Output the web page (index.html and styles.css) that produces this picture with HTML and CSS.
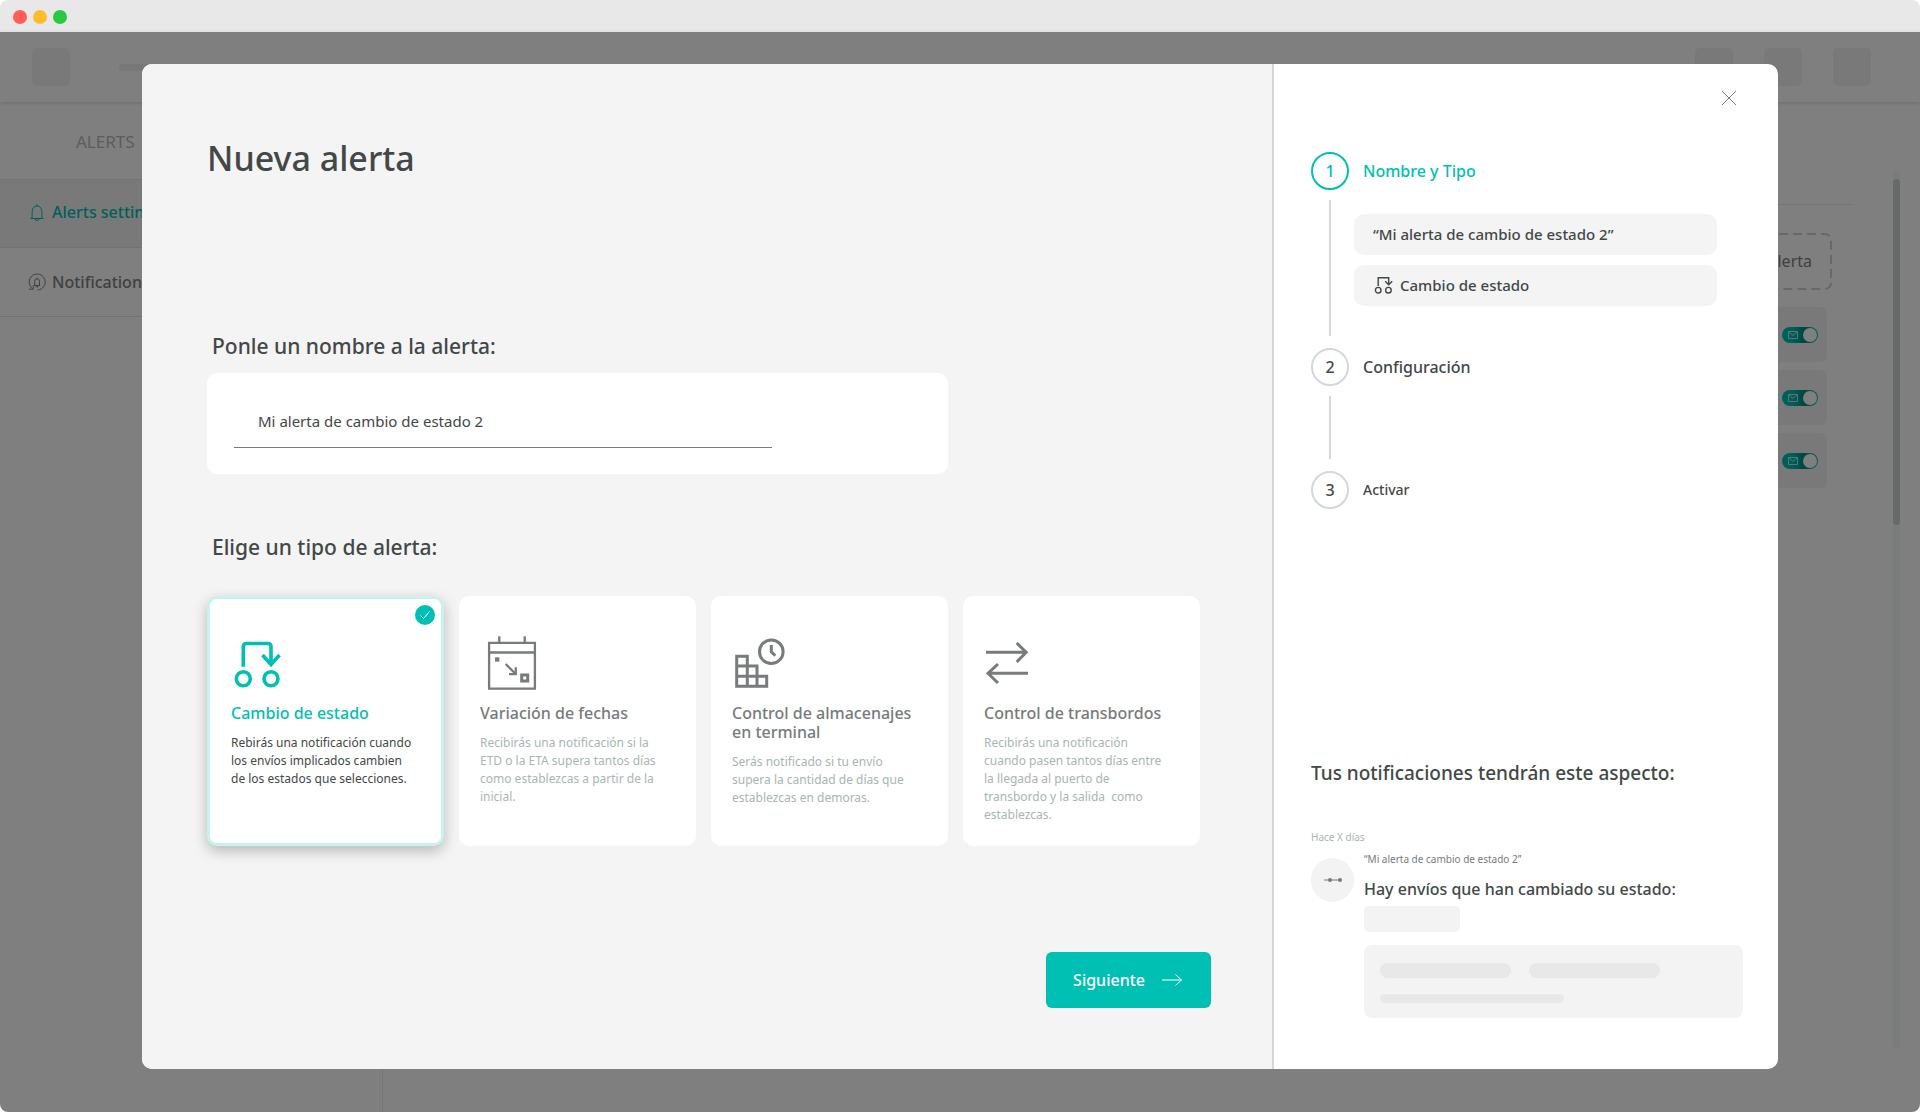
FILE: index.html
```html
<!DOCTYPE html>
<html lang="es">
<head>
<meta charset="UTF-8">
<meta name="viewport" content="width=device-width, initial-scale=1.0">
<title>Nueva alerta</title>
<link rel="stylesheet" href="styles.css">
</head>
<body>

<div class="window">
    <div class="titlebar">
        <span class="dot red"></span>
        <span class="dot yellow"></span>
        <span class="dot green"></span>
    </div>

    <div class="workspace">
        <!-- Page behind the modal -->
        <header class="topbar">
            <span class="square"></span>
            <span class="search"></span>
            <span class="square first-right"></span>
            <span class="square"></span>
            <span class="square"></span>
        </header>

        <div class="page">
            <nav class="sidebar">
                <p class="sidebar-title">ALERTS</p>
                <a class="active" href="#settings">
                    <svg width="18" height="20" viewBox="0 0 18 20"><path d="M2.500 16.500h13M4 16.500c0-2 .2-3.500.2-7 0-3.500 2-5.500 4.800-5.500s4.800 2 4.800 5.500c0 3.500.2 5 .2 7M9 4V2.200M7.200 16.700a1.800 1.800 0 0 0 3.600 0"/></svg>
                    Alerts settings
                </a>
                <a href="#notifications">
                    <svg width="18" height="20" viewBox="0 0 18 20"><path d="M4.500 16.500A8 8 0 1 1 9.500 18M.8 17.200h4.400v-3.700M5.800 13.500h6.400M6.700 13.500V9.200a2.400 2.400 0 0 1 4.800 0v4.300M9.100 6.800V5.500M8 14a1.100 1.100 0 0 0 2.200 0"/></svg>
                    Notifications
                </a>
            </nav>

            <main class="alerts">
                <div class="alerts-body">
                    <div class="alerts-head"></div>
                    <button class="new-alert" type="button">
                        <svg width="100%" height="100%"><rect x="1" y="1" width="99%" height="55" rx="6"/></svg>
                        + Nueva alerta
                    </button>
                    <div class="alert-row">
                        <label class="switch">
                            <input type="checkbox" aria-label="Email" checked>
                            <svg width="10" height="8" viewBox="0 0 10 8"><path d="M.5.5h9v7h-9zM1 1l4 3.500L9 1"/></svg>
                        </label>
                    </div>
                    <div class="alert-row">
                        <label class="switch">
                            <input type="checkbox" aria-label="Email" checked>
                            <svg width="10" height="8" viewBox="0 0 10 8"><path d="M.5.5h9v7h-9zM1 1l4 3.500L9 1"/></svg>
                        </label>
                    </div>
                    <div class="alert-row">
                        <label class="switch">
                            <input type="checkbox" aria-label="Email" checked>
                            <svg width="10" height="8" viewBox="0 0 10 8"><path d="M.5.5h9v7h-9zM1 1l4 3.500L9 1"/></svg>
                        </label>
                    </div>
                </div>
                <div class="scrollbar"><div class="thumb"></div></div>
            </main>
        </div>

        <!-- Modal -->
        <div class="overlay">
            <div class="modal" role="dialog" aria-labelledby="modalTitle">
                <form class="form" id="alertForm">
                    <h1 id="modalTitle">Nueva alerta</h1>

                    <label class="section-title" for="alert_name">Ponle un nombre a la alerta:</label>
                    <div class="name-box">
                        <input type="text" id="alert_name" name="alert_name" value="Mi alerta de cambio de estado 2">
                    </div>

                    <h2 class="section-title">Elige un tipo de alerta:</h2>
                    <div class="types">
                        <label class="type selected">
                            <input type="radio" name="alert_type" value="estado" checked>
                            <svg class="check" width="20" height="20" viewBox="0 0 20 20"><circle cx="10" cy="10" r="10"/><path d="M5.500 10.500l3 3 6-7"/></svg>
                            <svg class="icon" viewBox="0 0 58 56" stroke-width="3.600"><path d="M12.300 31.700V11.500a3 3 0 0 1 3-3H37a3 3 0 0 1 3 3V29M31.500 20l8.500 9.500 8.500-9.500"/><circle cx="12.300" cy="43.700" r="7"/><circle cx="40" cy="43.700" r="7"/></svg>
                            <span class="type-name">Cambio de estado</span>
                            <span class="type-text">Rebirás una notificación cuando<br>los envíos implicados cambien<br>de los estados que selecciones.</span>
                        </label>
                        <label class="type">
                            <input type="radio" name="alert_type" value="fechas">
                            <svg class="icon" viewBox="0 0 58 56" stroke-width="2.300"><path d="M9.100 7.800h45.800v45.800H9.100zM9 17.500h46M19.300 1.300v6M44.700 1.300v6M25.700 29l10 10M29 39.200h6.800v-7"/><path d="M16.200 23.500h2v2h-2z"/><path stroke-width="3" d="M41.700 40h6v6h-6z"/></svg>
                            <span class="type-name">Variación de fechas</span>
                            <span class="type-text">Recibirás una notificación si la<br>ETD o la ETA supera tantos días<br>como establezcas a partir de la<br>inicial.</span>
                        </label>
                        <label class="type">
                            <input type="radio" name="alert_type" value="almacenajes">
                            <svg class="icon" viewBox="0 0 58 56" stroke-width="3"><path d="M4.700 21.300h10.600v30M4.700 31H25v20.300M4.700 41.300h30v10h-30zM4.700 19.800v32"/><circle cx="39.300" cy="16.700" r="11.800"/><path d="M39.300 10v6.800l4 4"/></svg>
                            <span class="type-name">Control de almacenajes en terminal</span>
                            <span class="type-text">Serás notificado si tu envío<br>supera la cantidad de días que<br>establezcas en demoras.</span>
                        </label>
                        <label class="type">
                            <input type="radio" name="alert_type" value="transbordos">
                            <svg class="icon" viewBox="0 0 58 56" stroke-width="3"><path d="M2 17.300h41M32.700 8l9.500 9.300-9.500 9.700M44 38.300H3.500M14 29l-10 9.300L14 48"/></svg>
                            <span class="type-name">Control de transbordos</span>
                            <span class="type-text">Recibirás una notificación<br>cuando pasen tantos días entre<br>la llegada al puerto de<br>transbordo y la salida&nbsp; como<br>establezcas.</span>
                        </label>
                    </div>

                    <button class="next" type="submit">
                        Siguiente
                        <svg width="20" height="14" viewBox="0 0 20 14"><path d="M0 7h19.500M13.500 1.500L19.500 7l-6 5.500"/></svg>
                    </button>
                </form>

                <aside class="summary">
                    <button class="close" type="button" aria-label="Cerrar">
                        <svg width="14" height="14" viewBox="0 0 14 14"><path d="M0 0l14 14M14 0L0 14"/></svg>
                    </button>

                    <ol class="steps">
                        <li class="step current">
                            <div class="marker"><span class="number">1</span><span class="line"></span></div>
                            <div class="step-body">
                                <p class="step-name">Nombre y Tipo</p>
                                <div class="chips">
                                    <div class="chip">“Mi alerta de cambio de estado 2”</div>
                                    <div class="chip">
                                        <svg width="20" height="18" viewBox="0 0 20 18" stroke-width="1.400"><path d="M5.200 10V1.700h10.500v6.500M12.200 5.200l3.500 3.500 3.500-3.500"/><circle cx="5.200" cy="14.200" r="2.800"/><circle cx="15.400" cy="14.200" r="2.800"/></svg>
                                        Cambio de estado
                                    </div>
                                </div>
                            </div>
                        </li>
                        <li class="step">
                            <div class="marker"><span class="number">2</span><span class="line"></span></div>
                            <div class="step-body">
                                <p class="step-name">Configuración</p>
                            </div>
                        </li>
                        <li class="step last">
                            <div class="marker"><span class="number">3</span></div>
                            <div class="step-body">
                                <p class="step-name">Activar</p>
                            </div>
                        </li>
                    </ol>

                    <section class="preview">
                        <h3>Tus notificaciones tendrán este aspecto:</h3>
                        <p class="time">Hace X días</p>
                        <div class="notification">
                            <div class="avatar">
                                <svg width="20" height="6" viewBox="0 0 20 6"><path d="M1 3h16"/><circle cx="7" cy="3" r="2"/><circle cx="17" cy="3" r="2"/></svg>
                            </div>
                            <div class="notification-body">
                                <p class="alert-name">“Mi alerta de cambio de estado 2”</p>
                                <p class="message">Hay envíos que han cambiado su estado:</p>
                                <div class="tag"></div>
                                <div class="detail">
                                    <span class="bar"></span>
                                    <span class="bar"></span>
                                    <span class="bar thin"></span>
                                </div>
                            </div>
                        </div>
                    </section>
                </aside>
            </div>
        </div>
    </div>
</div>

</body>
</html>
```
FILE: styles.css
```css
* {
    box-sizing: border-box;
}

body {
    margin: 0;
    background-color: #fff;
    font-family: "Noto Sans", sans-serif;
    font-size: 16px;
    color: #424847;
}

h1, h2, h3, p, ol {
    margin: 0;
    padding: 0;
    font-weight: 500;
}

svg {
    display: block;
    flex: none;
    fill: none;
    stroke: currentColor;
}

button, input {
    font-family: inherit;
    color: inherit;
}

.window {
    display: flex;
    flex-direction: column;
    min-height: 100vh;
    border-radius: 8px;
    overflow: hidden;
}

/* Title bar */
.titlebar {
    display: flex;
    align-items: center;
    gap: 6px;
    height: 32px;
    padding: 2px 13px 0;
    background-color: #e8e8e8;
}

.dot {
    width: 14px;
    height: 14px;
    border-radius: 50%;
}

.red {
    background-color: #ff5f57;
}

.yellow {
    background-color: #ffbd2e;
}

.green {
    background-color: #28ca42;
}

.workspace {
    position: relative;
    flex: 1;
    display: flex;
    flex-direction: column;
}

/* Top bar */
.topbar {
    display: flex;
    align-items: flex-start;
    gap: 31px;
    height: 70px;
    padding: 16px 49px 0 32px;
    box-shadow: 0 1px 4px rgba(0, 0, 0, 0.16);
}

.square {
    width: 38px;
    height: 38px;
    border-radius: 5px;
    background-color: #f3f3f3;
}

.search {
    width: 240px;
    height: 7px;
    margin: 16px 0 0 18px;
    border-radius: 4px;
    background-color: #f0f0f0;
}

.first-right {
    margin-left: auto;
}

.page {
    flex: 1;
    display: flex;
}

/* Sidebar */
.sidebar {
    width: 383px;
    border-right: 1px solid #e8e8e8;
}

.sidebar-title {
    padding: 28px 0 25px 76px;
    font-size: 17px;
    font-weight: 400;
    line-height: 24px;
    color: #b4bcbb;
}

.sidebar a {
    display: flex;
    align-items: center;
    gap: 6px;
    height: 70px;
    padding-left: 28px;
    border-top: 1px solid #e4e4e4;
    border-bottom: 1px solid #e4e4e4;
    color: #7c8282;
    font-weight: 500;
    text-decoration: none;
}

.sidebar a.active {
    height: 68px;
    padding-bottom: 4px;
    border-bottom: none;
    background-color: #f3f3f3;
    color: #00bfb3;
}

/* Alert list */
.alerts {
    flex: 1;
    display: flex;
    gap: 41px;
    padding: 0 20px 64px 41px;
}

.alerts-body {
    flex: 1;
    display: flex;
    flex-direction: column;
}

.alerts-head {
    height: 103px;
    margin-bottom: 28px;
    border-bottom: 1px solid #e6e9e9;
}

.new-alert {
    position: relative;
    align-self: flex-end;
    width: 200px;
    height: 57px;
    margin: 0 20px 17px 0;
    padding: 0 20px 2px;
    border: none;
    background: none;
    font-size: 16px;
    text-align: right;
    color: #7c8282;
}

.new-alert svg {
    position: absolute;
    inset: 0;
    stroke: #ccd2d1;
    stroke-width: 2;
    stroke-dasharray: 9 5;
}

.alert-row {
    display: flex;
    align-items: center;
    justify-content: flex-end;
    height: 55px;
    margin: 0 25px 8px 0;
    padding: 0 9px;
    border-radius: 6px;
    background-color: #f3f3f3;
}

.switch {
    position: relative;
}

.switch input {
    display: block;
    appearance: none;
    width: 36px;
    height: 16px;
    margin: 0;
    padding: 1px;
    border-radius: 8px;
    background: linear-gradient(90deg, #00bfb3 30%, #008c84 60%, #00bfb3 90%);
}

.switch input::before {
    content: "";
    display: block;
    width: 14px;
    height: 14px;
    margin-left: auto;
    border-radius: 50%;
    background-color: #fff;
}

.switch svg {
    position: absolute;
    left: 6px;
    top: 4px;
    stroke: #b0ece8;
}

.scrollbar {
    width: 7px;
    margin-top: 69px;
    padding-top: 8px;
    border-radius: 4px;
    background-color: #f4f6f6;
}

.thumb {
    height: 346px;
    border-radius: 4px;
    background-color: #d0d5d4;
}

/* Modal */
.overlay {
    position: absolute;
    inset: 0;
    display: flex;
    padding: 32px 142px 43px;
    background-color: rgba(0, 0, 0, 0.5);
}

.modal {
    flex: 1;
    display: flex;
    border-radius: 10px;
    background-color: #fff;
    overflow: hidden;
}

.form {
    flex: 1;
    display: flex;
    flex-direction: column;
    padding: 74px 61px 61px 65px;
    background-color: #f4f4f4;
}

.form h1 {
    margin-bottom: 154px;
    font-size: 34px;
    line-height: 40px;
}

.section-title {
    padding-left: 5px;
    font-size: 21px;
    font-weight: 500;
    line-height: 28px;
}

.name-box {
    max-width: 741px;
    margin: 13px 0 59px;
    padding: 33px 27px 26px;
    border-radius: 10px;
    background-color: #fff;
}

.name-box input {
    display: block;
    width: 100%;
    max-width: 538px;
    height: 42px;
    padding: 0 24px 12px;
    border: none;
    border-bottom: 1px solid #777b7b;
    background: none;
    font-size: 15px;
    outline: none;
}

/* Alert types */
.types {
    display: grid;
    grid-template-columns: repeat(4, 1fr);
    gap: 15px;
    margin: 35px 11px 106px 0;
}

.type {
    position: relative;
    min-height: 250px;
    padding: 39px 21px 20px;
    border-radius: 10px;
    background-color: #fff;
    color: #777b7b;
    cursor: pointer;
}

.type input {
    position: absolute;
    opacity: 0;
}

.type.selected {
    padding: 36px 18px 17px 21px;
    border: 3px solid #c9f2ef;
    box-shadow: 0 5px 14px rgba(0, 0, 0, 0.25);
    color: #00bfb3;
}

.icon {
    width: 58px;
    height: 56px;
    margin-bottom: 13px;
}

.check {
    position: absolute;
    top: 6px;
    right: 6px;
}

.check circle {
    fill: #00bfb3;
    stroke: none;
}

.check path {
    stroke: #fff;
}

.type-name {
    display: block;
    margin-bottom: 11px;
    font-weight: 500;
    line-height: 19px;
}

.type-text {
    display: block;
    font-size: 12px;
    line-height: 18px;
    color: #a9b5b3;
}

.selected .type-text {
    color: #424847;
}

.next {
    display: flex;
    align-items: center;
    align-self: flex-end;
    gap: 17px;
    height: 56px;
    padding: 0 29px 0 27px;
    border: none;
    border-radius: 6px;
    background-color: #00bfb3;
    color: #fff;
    font-size: 16px;
    font-weight: 500;
    cursor: pointer;
}

/* Summary column */
.summary {
    display: flex;
    flex-direction: column;
    width: 506px;
    padding: 24px 35px 51px 37px;
    border-left: 2px solid #d3d9d8;
}

.close {
    display: flex;
    align-items: center;
    justify-content: center;
    align-self: flex-end;
    width: 20px;
    height: 20px;
    margin: 0 4px 44px 0;
    padding: 0;
    border: none;
    background: none;
    color: #777b7b;
    cursor: pointer;
}

.steps {
    list-style: none;
}

.step {
    display: flex;
    gap: 5px;
    min-height: 123px;
}

.step.last {
    min-height: 0;
    font-size: 14px;
}

.marker {
    display: flex;
    flex-direction: column;
    align-items: center;
}

.number {
    display: flex;
    align-items: center;
    justify-content: center;
    width: 38px;
    height: 38px;
    border: 2px solid #d3d9d8;
    border-radius: 50%;
    font-size: 16px;
    font-weight: 500;
}

.current .number {
    border-color: #00bfb3;
    color: #00bfb3;
}

.line {
    flex: 1;
    width: 2px;
    margin: 10px 0 12px;
    background-color: #d3d9d8;
}

.step-body {
    flex: 1;
}

.step-name {
    padding-left: 9px;
    line-height: 38px;
}

.current .step-name {
    color: #00bfb3;
}

.chips {
    display: flex;
    flex-direction: column;
    gap: 10px;
    margin: 24px 26px 42px 0;
}

.chip {
    display: flex;
    align-items: center;
    gap: 7px;
    height: 41px;
    padding: 0 19px 2px;
    border-radius: 10px;
    background-color: #f4f4f4;
    font-size: 15px;
}

/* Notification preview */
.preview {
    margin-top: auto;
}

.preview h3 {
    margin-bottom: 44px;
    font-size: 19px;
    line-height: 26px;
}

.time {
    margin-bottom: 8px;
    font-size: 10px;
    font-weight: 400;
    line-height: 14px;
    color: #a9b5b3;
}

.notification {
    display: flex;
    gap: 10px;
}

.avatar {
    display: flex;
    align-items: center;
    justify-content: center;
    width: 43px;
    height: 44px;
    margin-top: 6px;
    border-radius: 50%;
    background-color: #f3f3f3;
    color: #777b7b;
}

.avatar circle {
    fill: currentColor;
    stroke: none;
}

.notification-body {
    flex: 1;
}

.alert-name {
    margin-bottom: 12px;
    font-size: 10px;
    font-weight: 400;
    line-height: 14px;
    color: #777b7b;
}

.message {
    line-height: 22px;
}

.tag {
    width: 96px;
    height: 26px;
    margin: 6px 0 13px;
    border-radius: 5px;
    background-color: #f3f3f3;
}

.detail {
    display: flex;
    flex-wrap: wrap;
    gap: 16px 18px;
    padding: 18px 16px 15px;
    border-radius: 8px;
    background-color: #f3f3f3;
}

.bar {
    width: 131px;
    height: 15px;
    border-radius: 8px;
    background-color: #e8e8e8;
}

.bar.thin {
    width: 184px;
    height: 9px;
}
```
